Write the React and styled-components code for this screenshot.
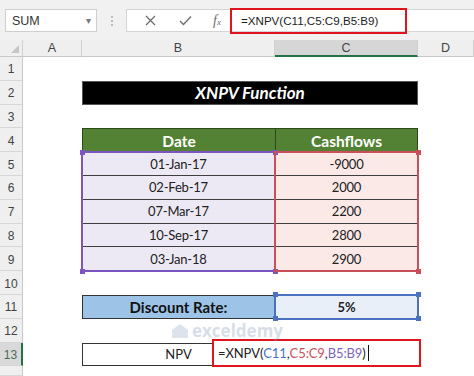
import React from 'react'
import styled, { createGlobalStyle } from 'styled-components'

const Global = createGlobalStyle`
  html, body { margin:0; padding:0; background:#fff; }
  body { font-family:"Liberation Sans", Arial, sans-serif; }
`

const ROW_H = 23.8

const dates = ['01-Jan-17', '02-Feb-17', '07-Mar-17', '10-Sep-17', '03-Jan-18']
const flows = ['-9000', '2000', '2200', '2800', '2900']

function App() {
  return (
    <Page>
      <Global />
      <FormulaBar>
        <NameBox>
          <span>SUM</span>
          <Caret>▾</Caret>
        </NameBox>
        <Dots>
          <i /><i /><i />
        </Dots>
        <InputArea>
          <IconBtn>
            <svg width="11" height="11" viewBox="0 0 11 11">
              <path d="M1 1 L10 10 M10 1 L1 10" stroke="#6d6d6d" strokeWidth="1.3" fill="none" />
            </svg>
          </IconBtn>
          <IconBtn>
            <svg width="13" height="11" viewBox="0 0 13 11">
              <path d="M1 6 L4.5 9.5 L12 1.5" stroke="#6d6d6d" strokeWidth="1.4" fill="none" />
            </svg>
          </IconBtn>
          <Fx>f<sub>x</sub></Fx>
          <FormulaBox>=XNPV(C11,C5:C9,B5:B9)</FormulaBox>
        </InputArea>
      </FormulaBar>

      <Sheet>
        <Corner $row={1} $col={1}>
          <svg width="8" height="8" viewBox="0 0 8 8">
            <path d="M8 0 L8 8 L0 8 Z" fill="#c6c6c6" />
          </svg>
        </Corner>
        {['A', 'B', 'C', 'D'].map((c, i) => (
          <ColHead key={c} $row={1} $col={i + 2} $active={c === 'C'}>{c}</ColHead>
        ))}
        {Array.from({ length: 14 }, (_, i) => (
          <RowHead key={i} $row={i + 2} $col={1} $active={i + 1 === 13}>{i < 13 ? i + 1 : ''}</RowHead>
        ))}

        <Title $row={3} $col="3 / 5">XNPV Function</Title>

        <HeadCell $row={5} $col={3}>Date</HeadCell>
        <HeadCell $row={5} $col={4} $last>Cashflows</HeadCell>

        {dates.map((d, i) => (
          <DataCell key={d} $row={6 + i} $col={3} $bg="#ede9f4" $end={i === 4}>{d}</DataCell>
        ))}
        {flows.map((f, i) => (
          <DataCell key={f} $row={6 + i} $col={4} $bg="#fbe9e8" $end={i === 4}>{f}</DataCell>
        ))}
        <Range $row="6 / 11" $col={3} $color="#7c55c0">
          <Handle $top $left /><Handle $top $right /><Handle $bottom $left /><Handle $bottom $right />
        </Range>
        <Range $row="6 / 11" $col={4} $color="#c9505a">
          <Handle $top $right /><Handle $bottom $right />
        </Range>

        <LabelCell $row={12} $col={3}>Discount Rate:</LabelCell>
        <RateCell $row={12} $col={4}>5%</RateCell>
        <Range $row={12} $col={4} $color="#4a72c0">
          <Handle $top $left /><Handle $top $right /><Handle $bottom $left /><Handle $bottom $right />
        </Range>

        <Watermark $row={13} $col="3 / 5">
          <svg width="16" height="14" viewBox="0 0 16 14">
            <path d="M8 0 L16 6 L16 14 L0 14 L0 6 Z" fill="#8ea4c6" />
          </svg>
          <span>exceldemy</span>
        </Watermark>

        <NpvCell $row={14} $col={3}>NPV</NpvCell>
        <EditCell $row={14} $col="3 / 5">
          <Tok>=XNPV(</Tok>
          <Tok $c="#4a72c0">C11</Tok>
          <Tok>,</Tok>
          <Tok $c="#c9505a">C5:C9</Tok>
          <Tok>,</Tok>
          <Tok $c="#8064b8">B5:B9</Tok>
          <Tok>)</Tok>
          <Cursor />
        </EditCell>
      </Sheet>
    </Page>
  )
}

export default App

const Page = styled.div`
  width:474px;
  height:376px;
  overflow:hidden;
  display:flex;
  flex-direction:column;
  background:#fff;
`

const FormulaBar = styled.div`
  height:40px;
  flex:none;
  background:#f1f1f1;
  display:flex;
  align-items:center;
  padding-left:5px;
  padding-top:1px;
  box-sizing:border-box;
`

const NameBox = styled.div`
  width:92px;
  height:23px;
  box-sizing:border-box;
  background:#fff;
  border:1px solid #cfcfcf;
  display:flex;
  align-items:center;
  justify-content:space-between;
  padding:0 5px 0 6px;
  font-size:12.5px;
  color:#333;
`

const Caret = styled.span`
  font-size:10px;
  color:#777;
`

const Dots = styled.div`
  width:29px;
  display:flex;
  flex-direction:column;
  align-items:center;
  gap:2px;
  i{
    width:2px;
    height:2px;
    background:#bdbdbd;
    display:block;
  }
`

const InputArea = styled.div`
  flex:1;
  height:23px;
  background:#fff;
  border:1px solid #d4d4d4;
  border-right:none;
  box-sizing:border-box;
  display:flex;
  align-items:center;
  padding-left:6px;
`

const IconBtn = styled.div`
  width:35px;
  display:flex;
  justify-content:center;
  align-items:center;
`

const Fx = styled.div`
  width:28px;
  text-align:center;
  font-family:"Liberation Serif", serif;
  font-style:italic;
  font-size:14px;
  color:#6d6d6d;
  sub{
    font-size:9px;
    vertical-align:baseline;
  }
`

const FormulaBox = styled.div`
  width:177px;
  height:26px;
  box-sizing:border-box;
  border:2px solid #e0141c;
  margin-left:-1px;
  padding-left:9px;
  display:flex;
  align-items:center;
  font-size:11.6px;
  color:#222;
`

const Sheet = styled.div`
  flex:1;
  position:relative;
  display:grid;
  grid-template-columns:23px 59px 193px 143px 1fr;
  grid-template-rows:17px repeat(13, ${ROW_H}px) 1fr;
  font-family:Lato, "Open Sans", sans-serif;
`

const Cell = styled.div`
  grid-row:${p => p.$row};
  grid-column:${p => p.$col};
  display:flex;
  align-items:center;
  justify-content:center;
  box-sizing:border-box;
  min-width:0;
`

const Corner = styled(Cell)`
  background:#efefef;
  border-right:1px solid #d0d0d0;
  border-bottom:1px solid #c8c8c8;
  justify-content:flex-end;
  align-items:flex-end;
  padding:0 3px 3px 0;
`

const ColHead = styled(Cell)`
  background:${p => (p.$active ? '#d6d6d6' : '#efefef')};
  border-right:1px solid #d0d0d0;
  border-bottom:${p => (p.$active ? '2px solid #217346' : '1px solid #c8c8c8')};
  font-family:"Liberation Sans", Arial, sans-serif;
  font-size:12.5px;
  color:#444;
`

const RowHead = styled(Cell)`
  background:${p => (p.$active ? '#d9d9d9' : '#efefef')};
  border-right:${p => (p.$active ? '2px solid #217346' : '1px solid #c8c8c8')};
  border-bottom:1px solid #d6d6d6;
  font-family:"Liberation Sans", Arial, sans-serif;
  font-size:12px;
  color:${p => (p.$active ? '#4a6e58' : '#444')};
  padding-top:2px;
`

const Title = styled(Cell)`
  background:#000;
  color:#fff;
  font-weight:700;
  font-style:italic;
  font-size:17px;
  border:1px solid #555;
`

const HeadCell = styled(Cell)`
  background:#548235;
  color:#fff;
  font-weight:700;
  font-size:15.5px;
  border-top:1px solid #2b4a1a;
  border-left:1px solid #2b4a1a;
  border-right:${p => (p.$last ? '1px solid #2b4a1a' : 'none')};
`

const DataCell = styled(Cell)`
  background:${p => p.$bg};
  border-bottom:${p => (p.$end ? 'none' : '1.5px solid #3f3f3f')};
  font-size:13px;
  color:#222;
  letter-spacing:-0.2px;
`

const Range = styled.div`
  grid-row:${p => p.$row};
  grid-column:${p => p.$col};
  position:relative;
  border:2px solid ${p => p.$color};
  margin:-1px;
  color:${p => p.$color};
  pointer-events:none;
`

const Handle = styled.span`
  position:absolute;
  width:5px;
  height:5px;
  background:currentColor;
  ${p => (p.$top ? 'top:-3.5px;' : 'bottom:-3.5px;')}
  ${p => (p.$left ? 'left:-3.5px;' : 'right:-3.5px;')}
`

const LabelCell = styled(Cell)`
  background:#9dc3e6;
  border:1px solid #333;
  font-weight:700;
  font-size:15px;
  color:#111;
`

const RateCell = styled(Cell)`
  background:#e9eff8;
  font-weight:700;
  font-size:13px;
  color:#222;
`

const NpvCell = styled(Cell)`
  background:#fff;
  border:1px solid #333;
  font-size:13px;
  color:#222;
`

const EditCell = styled(Cell)`
  margin-left:130px;
  margin-right:-3px;
  margin-top:-2px;
  height:28px;
  align-self:center;
  justify-content:flex-start;
  padding-left:4px;
  border:2.5px solid #e3141c;
  background:#fff;
  font-size:13px;
  color:#222;
  letter-spacing:-0.1px;
`

const Tok = styled.span`
  color:${p => p.$c || '#222'};
`

const Cursor = styled.span`
  width:1px;
  height:16px;
  background:#111;
  margin-left:2px;
`

const Watermark = styled(Cell)`
  align-self:end;
  justify-content:flex-start;
  margin-left:90px;
  margin-bottom:2px;
  gap:4px;
  opacity:0.3;
  pointer-events:none;
  span{
    font-family:"Open Sans", sans-serif;
    font-weight:700;
    font-size:17px;
    line-height:20px;
    color:#7f95b8;
  }
`
